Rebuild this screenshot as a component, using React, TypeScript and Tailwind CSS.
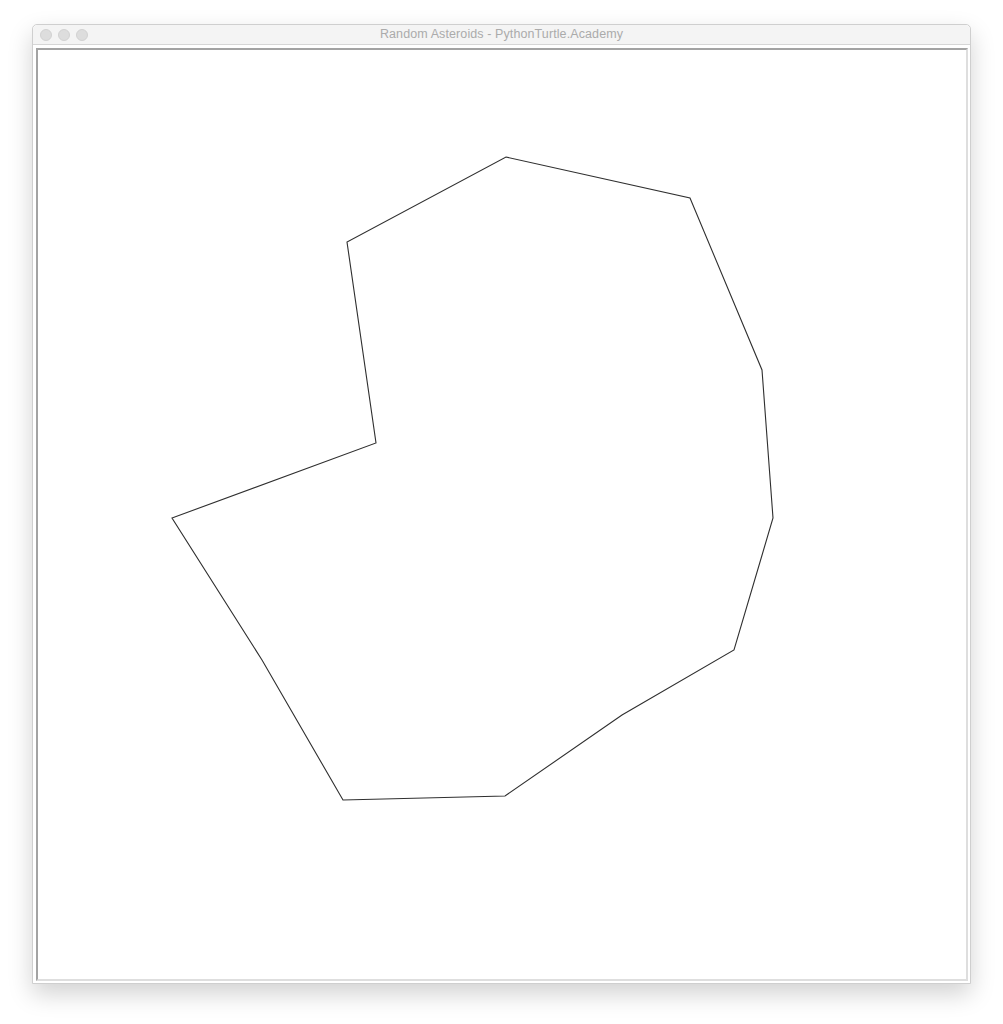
import React from "react";

const pts: [number, number][] = [
  [506, 157],
  [690, 198],
  [762, 370],
  [773, 518],
  [734, 650],
  [622, 715],
  [505, 796],
  [343, 800],
  [262, 660],
  [172, 518],
  [376, 443],
  [347, 242],
];

export default function App() {
  return (
    <div className="w-[1003px] h-[1024px] bg-white pl-[32px] pt-[24px]" style={{ fontFamily: '"Liberation Sans", Arial, sans-serif' }}>
      <div className="w-[939px] h-[960px] flex flex-col border border-[#cfcfcf] rounded-t-[5px] bg-white shadow-[0_10px_24px_rgba(0,0,0,0.18)]">
        <div className="relative h-[20px] flex items-center justify-center bg-[#f4f4f4] border-b border-[#d6d6d6] rounded-t-[5px] shrink-0">
          <div className="absolute left-[7px] top-[4px] flex gap-[6px]">
            <span className="w-[12px] h-[12px] rounded-full bg-[#dddddd] border border-[#d2d2d2]" />
            <span className="w-[12px] h-[12px] rounded-full bg-[#dddddd] border border-[#d2d2d2]" />
            <span className="w-[12px] h-[12px] rounded-full bg-[#dddddd] border border-[#d2d2d2]" />
          </div>
          <span className="text-[12.5px] leading-none text-[#ababab] tracking-[0.1px]">Random Asteroids - PythonTurtle.Academy</span>
        </div>
        <div className="flex-1 pl-[3px] pt-[3px] pr-[2px] pb-[2px] flex">
          <div className="flex-1 border-t-2 border-l-2 border-t-[#a3a3a3] border-l-[#a3a3a3] border-r-2 border-b-2 border-r-[#dedede] border-b-[#dedede] bg-white">
            <svg className="block w-full h-full" viewBox="38 50 928 929" preserveAspectRatio="none">
              <polygon
                points={pts.map((p) => p.join(",")).join(" ")}
                fill="none"
                stroke="#2f2f2f"
                strokeWidth={1.1}
              />
            </svg>
          </div>
        </div>
      </div>
    </div>
  );
}
